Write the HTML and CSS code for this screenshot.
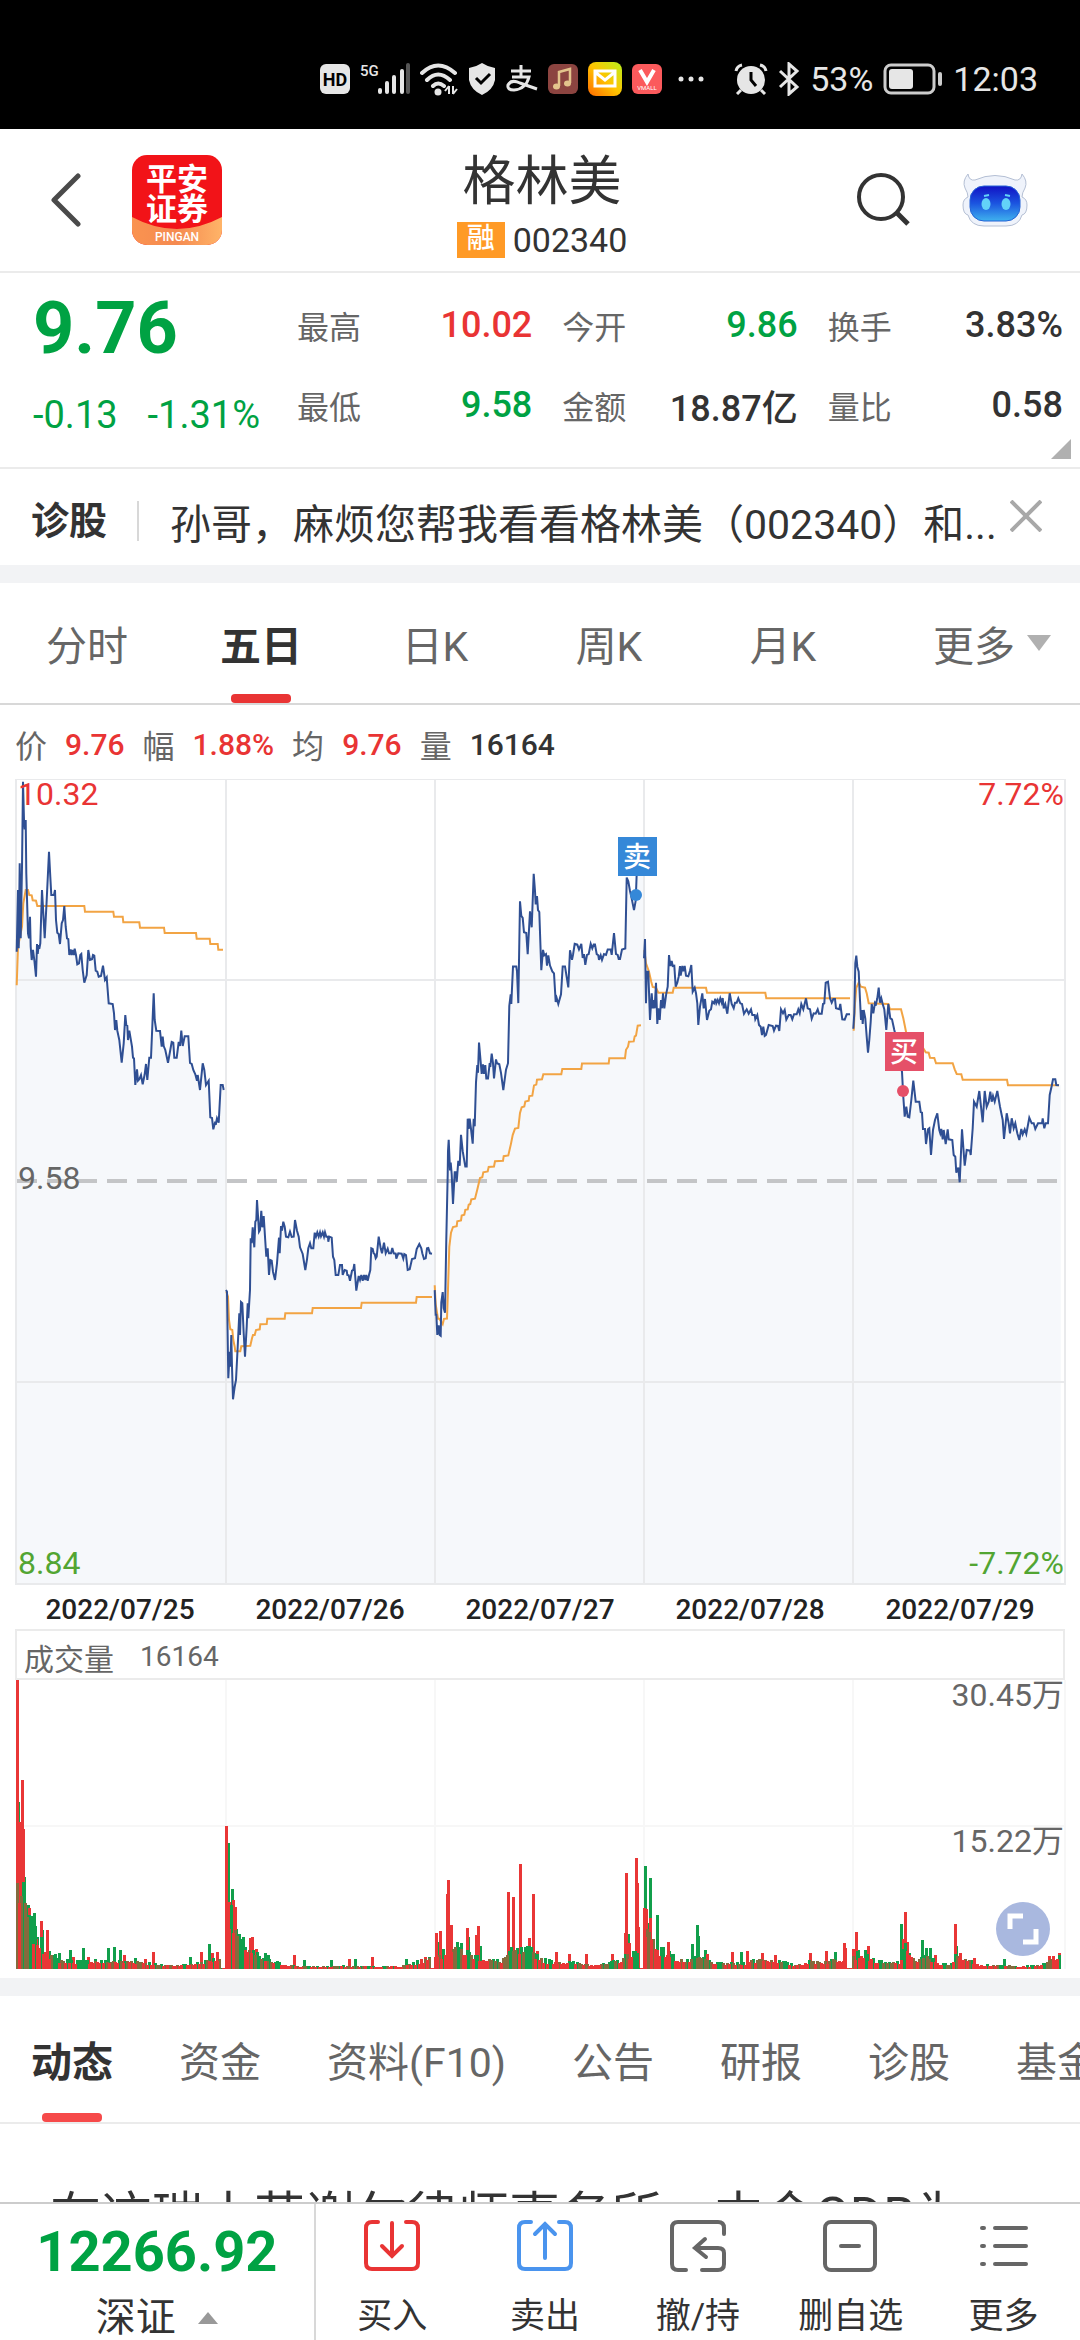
FILE: index.html
```html
<!DOCTYPE html>
<html lang="zh-CN">
<head>
<meta charset="utf-8">
<meta name="viewport" content="width=device-width, initial-scale=1">
<title>格林美 002340</title>
<link rel="stylesheet" href="styles.css">
</head>
<body>
<div class="app">
  <div class="status">
    <svg class="status-icon" width="30" height="30" viewBox="0 0 30 30"><rect width="30" height="30" rx="6" fill="#e6e6e6"/><text x="15" y="22" text-anchor="middle" font-size="18" font-weight="700" class="svg-text" fill="#000">HD</text></svg>
    <svg class="status-icon" width="50" height="34" viewBox="0 0 50 34"><text x="0" y="14" font-size="15" class="svg-text" font-weight="500" fill="#e6e6e6">5G</text><g stroke="#e6e6e6" stroke-width="4" stroke-linecap="round"><path d="M20 30v-2M27 30v-9M34 30v-15M42 30V9"/></g><path d="M48 30V3" stroke="#555" stroke-width="4" stroke-linecap="round"/></svg>
    <svg class="status-icon" width="38" height="34" viewBox="0 0 38 34"><g fill="none" stroke="#e6e6e6" stroke-width="4" stroke-linecap="round"><path d="M2 11Q18-4 35 11M7 18Q18 7 30 18M13 24Q18 19 24 24"/></g><circle cx="18" cy="30" r="3.500" fill="#e6e6e6"/><path d="M29 24v8M25 29l4-5M33 24v8M33 32l4-5" stroke="#e6e6e6" stroke-width="2"/></svg>
    <svg class="status-icon" width="28" height="32" viewBox="0 0 28 32"><path d="M14 0Q20 4 27 5V17Q25 27 14 32Q3 27 1 17V5Q8 4 14 0Z" fill="#e6e6e6"/><path d="M8 15l5 5 9-9" fill="none" stroke="#000" stroke-width="3"/></svg>
    <svg class="status-icon" width="32" height="28" viewBox="0 0 32 28"><g fill="none" stroke="#e6e6e6" stroke-width="3"><path d="M5 6H25M15 0V12M6 12H23Q20 24 8 25Q1 25 2 20Q5 14 14 18L31 24"/></g></svg>
    <svg class="status-icon" width="30" height="30" viewBox="0 0 30 30"><rect width="30" height="30" rx="6" fill="#8c4440"/><path d="M11 22V8l11-3v14" fill="none" stroke="#e3c48c" stroke-width="2.500"/><ellipse cx="8.500" cy="22.500" rx="3.500" ry="3" fill="#e3c48c"/><ellipse cx="19.500" cy="19.500" rx="3.500" ry="3" fill="#e3c48c"/></svg>
    <svg class="status-icon" width="34" height="34" viewBox="0 0 34 34"><defs><linearGradient id="mail" x1="0" y1="1" x2="1" y2="0"><stop offset="0" stop-color="#ff6a00"/><stop offset=".5" stop-color="#ffc400"/><stop offset="1" stop-color="#b8f01c"/></linearGradient></defs><rect width="34" height="34" rx="8" fill="url(#mail)"/><path d="M7 9H27V24H7ZM7 10l10 8 10-8" fill="none" stroke="#fff" stroke-width="3"/></svg>
    <svg class="status-icon" width="30" height="30" viewBox="0 0 30 30"><rect width="30" height="30" rx="6" fill="#fb5a5c"/><path d="M8 6l7 12 7-12" fill="none" stroke="#fff" stroke-width="4"/><text x="15" y="26" text-anchor="middle" font-size="6" class="svg-text" fill="#fff">VMALL</text></svg>
    <svg class="status-icon more" width="26" height="8" viewBox="0 0 26 8"><g fill="#e6e6e6"><circle cx="3" cy="4" r="2.500"/><circle cx="13" cy="4" r="2.500"/><circle cx="23" cy="4" r="2.500"/></g></svg>
    <svg class="status-icon alarm" width="34" height="32" viewBox="0 0 34 32"><circle cx="17" cy="17" r="14" fill="#e6e6e6"/><path d="M2 8Q3 3 8 2M32 8Q31 3 26 2M7 27l-4 4M27 27l4 4" stroke="#e6e6e6" stroke-width="3" fill="none"/><path d="M17 9v8l5 6" fill="none" stroke="#000" stroke-width="3"/></svg>
    <svg class="status-icon" width="22" height="34" viewBox="0 0 22 34"><path d="M2 9L19 25L11 32V2L19 9L2 25" fill="none" stroke="#e6e6e6" stroke-width="3"/></svg>
    <span class="status-text">53%</span>
    <svg class="status-icon" width="60" height="32" viewBox="0 0 60 32"><rect x="2" y="2" width="49" height="28" rx="6" fill="none" stroke="#ccc" stroke-width="3"/><rect x="6" y="6" width="24" height="20" rx="3" fill="#e6e6e6"/><path d="M57 11v10" stroke="#ccc" stroke-width="4" stroke-linecap="round"/></svg>
    <span class="status-text">12:03</span>
  </div>

  <header class="header">
    <button class="icon-btn back" aria-label="返回"><svg width="32" height="54" viewBox="0 0 32 54"><path d="M28 3L4 27L28 51" fill="none" stroke="#4a4a4a" stroke-width="5" stroke-linecap="round" stroke-linejoin="round"/></svg></button>
    <svg class="logo" width="90" height="90" viewBox="0 0 90 90"><defs><clipPath id="logoClip"><rect width="90" height="90" rx="15"/></clipPath><linearGradient id="gold"><stop offset="0" stop-color="#fa9350"/><stop offset=".5" stop-color="#f58a50"/><stop offset="1" stop-color="#ffb468"/></linearGradient></defs><g clip-path="url(#logoClip)"><rect width="90" height="90" fill="#f21318"/><path d="M0 62Q45 86 90 62V90H0Z" fill="url(#gold)"/></g><text x="45" y="35" text-anchor="middle" class="svg-text" font-size="31" font-weight="700" fill="#fff">平安</text><text x="45" y="65" text-anchor="middle" class="svg-text" font-size="31" font-weight="700" fill="#fff">证券</text><text x="45" y="86" text-anchor="middle" class="svg-text" font-size="12" font-weight="500" fill="#fff">PINGAN</text></svg>
    <div class="title">
      <h1>格林美</h1>
      <div class="code"><span class="tag">融</span><span>002340</span></div>
    </div>
    <button class="icon-btn search" aria-label="搜索"><svg width="54" height="54" viewBox="0 0 54 54"><circle cx="25" cy="24" r="22" fill="none" stroke="#333" stroke-width="4"/><path d="M40 39l12 12" stroke="#333" stroke-width="5"/></svg></button>
    <button class="icon-btn" aria-label="助手"><svg width="66" height="54" viewBox="0 0 66 54"><defs><linearGradient id="face" x1="0" y1="0" x2="0" y2="1"><stop offset="0" stop-color="#1111c4"/><stop offset=".5" stop-color="#1b55e0"/><stop offset="1" stop-color="#3fb2ee"/></linearGradient></defs><path d="M6 1Q7 8 13 7Q33-2 53 7Q59 8 60 1Q66 8 63 15Q60 20 60 24Q65 26 65 32Q65 41 60 42Q57 53 44 53H22Q9 53 6 42Q1 41 1 32Q1 26 6 24Q6 20 3 15Q0 8 6 1Z" fill="#eff3fb" stroke="#b4bfd4" stroke-width="1"/><rect x="8" y="13" width="50" height="35" rx="14" fill="url(#face)" stroke="#2463d6" stroke-width="1"/><ellipse cx="24" cy="31" rx="4.500" ry="6" fill="#63d2f8"/><ellipse cx="44" cy="31" rx="4.500" ry="6" fill="#63d2f8"/><path d="M22 23l5-1M43 22l5 1" stroke="#63d2f8" stroke-width="2"/></svg></button>
  </header>

  <section class="quote">
    <div class="price">
      <strong>9.76</strong>
      <div class="change"><span>-0.13</span><span>-1.31%</span></div>
    </div>
    <dl class="stats">
      <div><dt>最高</dt><dd class="up">10.02</dd></div>
      <div><dt>今开</dt><dd class="down">9.86</dd></div>
      <div><dt>换手</dt><dd>3.83%</dd></div>
      <div><dt>最低</dt><dd class="down">9.58</dd></div>
      <div><dt>金额</dt><dd>18.87亿</dd></div>
      <div><dt>量比</dt><dd>0.58</dd></div>
    </dl>
    <svg class="corner" width="20" height="20" viewBox="0 0 20 20"><path d="M20 0V20H0Z" fill="#b0b0b0"/></svg>
  </section>

  <section class="notice">
    <b>诊股</b>
    <p>孙哥，麻烦您帮我看看格林美（002340）和...</p>
    <button class="icon-btn close" aria-label="关闭"><svg width="32" height="32" viewBox="0 0 32 32"><path d="M1 1L31 31M31 1L1 31" stroke="#a8a8a8" stroke-width="4"/></svg></button>
  </section>

  <nav class="periods">
    <button>分时</button><button class="active">五日</button><button>日K</button><button>周K</button><button>月K</button>
    <button class="more-periods">更多<svg width="24" height="16" viewBox="0 0 24 16"><path d="M0 0H24L12 16Z" fill="#b0b0b0"/></svg></button>
  </nav>

  <div class="legend">
    <span>价</span><span class="up num">9.76</span><span>幅</span><span class="up num">1.88%</span><span>均</span><span class="up num">9.76</span><span>量</span><span class="dark num">16164</span>
  </div>

  <section class="chart">
    <svg id="price" viewBox="0 0 1080 806" role="img" aria-label="五日走势">
      <g id="areas" fill="#f6f8fb"></g>
      <path d="M15 201H1065M15 603H1065M226 0V805M435 0V805M644 0V805M853 0V805" stroke="#e9eaec" stroke-width="2"/>
      <path d="M16 0V806M1065 0V806M16 0H1065M16 805H1065" stroke="#e9eaec" stroke-width="2"/>
      <path d="M17 402H1064" stroke="#c4c5c7" stroke-width="4" stroke-dasharray="20 10"/>
      <g id="averages" fill="none" stroke="#f2a444" stroke-width="2"></g>
      <g id="prices" fill="none" stroke="#2f4f93" stroke-width="2"></g>
      <circle cx="636" cy="116" r="6" fill="#3588d8"/><rect x="618" y="58" width="39" height="39" fill="#3588d8"/>
      <text x="637" y="88" text-anchor="middle" class="svg-text" font-size="28" font-weight="500" fill="#fff">卖</text>
      <circle cx="903" cy="312" r="6" fill="#e55068"/><rect x="885" y="253" width="39" height="39" fill="#e55068"/>
      <text x="904" y="283" text-anchor="middle" class="svg-text" font-size="28" font-weight="500" fill="#fff">买</text>
    </svg>
    <span class="axis top left up">10.32</span><span class="axis top right up">7.72%</span>
    <span class="axis middle left">9.58</span>
    <span class="axis bottom left low">8.84</span><span class="axis bottom right low">-7.72%</span>
  </section>
  <div class="dates"><span>2022/07/25</span><span>2022/07/26</span><span>2022/07/27</span><span>2022/07/28</span><span>2022/07/29</span></div>

  <div class="volume-title"><span>成交量</span><span class="amount">16164</span></div>
  <section class="chart volume">
    <svg id="volume" viewBox="0 0 1080 290" role="img" aria-label="成交量">
      <path d="M16 146H1065M226 0V289M435 0V289M644 0V289M853 0V289M1065 0V289" stroke="#f7f7f7" stroke-width="2"/>
      <g id="bars"></g>
    </svg>
    <span class="axis top right">30.45万</span><span class="axis half right">15.22万</span>
    <button class="icon-btn expand" aria-label="全屏"><svg width="54" height="54" viewBox="0 0 54 54"><circle cx="27" cy="27" r="27" fill="#a9b8df"/><path d="M14 27V14H27M27 40H40V27" fill="none" stroke="#fff" stroke-width="5"/></svg></button>
  </section>

  <nav class="sections">
    <button class="active">动态</button><button>资金</button><button>资料(F10)</button><button>公告</button><button>研报</button><button>诊股</button><button>基金</button>
  </nav>
  <article class="feed">在这瑞士苏谢尔律师事务所，中金GDR为</article>

  <footer class="bar">
    <button class="index"><strong>12266.92</strong><span>深证<svg width="20" height="12" viewBox="0 0 20 12"><path d="M10 0L20 12H0Z" fill="#999"/></svg></span></button>
    <button class="action"><svg width="56" height="52" viewBox="0 0 56 52"><g fill="none" stroke="#e93434" stroke-width="4" stroke-linecap="round"><path d="M14 2H8Q2 2 2 8V43Q2 49 8 49H48Q54 49 54 43V8Q54 2 48 2H42M28 3V36M18 26l10 10 10-10"/></g></svg>买入</button>
    <button class="action"><svg width="56" height="52" viewBox="0 0 56 52"><g fill="none" stroke="#4a94ee" stroke-width="4" stroke-linecap="round"><path d="M14 2H8Q2 2 2 8V43Q2 49 8 49H48Q54 49 54 43V8Q54 2 48 2H42M28 38V4M18 14L28 4l10 10"/></g></svg>卖出</button>
    <button class="action"><svg width="56" height="52" viewBox="0 0 56 52"><g fill="none" stroke="#666" stroke-width="4" stroke-linecap="round"><path d="M54 14V8Q54 2 48 2H8Q2 2 2 8V44Q2 50 8 50H16M32 50H48Q54 50 54 44V33Q54 28 48 28H25M35 19l-10 9 11 9"/></g></svg>撤/持</button>
    <button class="action"><svg width="56" height="52" viewBox="0 0 56 52"><g fill="none" stroke="#666" stroke-width="4" stroke-linecap="round"><rect x="2" y="2" width="50" height="48" rx="6"/><path d="M18 26H36"/></g></svg>删自选</button>
    <button class="action"><svg width="50" height="52" viewBox="0 0 50 52"><g fill="none" stroke="#666" stroke-width="4" stroke-linecap="round"><path d="M3 8h2M16 8H47M3 26h2M16 26H47M3 44h2M16 44H47"/></g></svg>更多</button>
  </footer>
</div>
<script src="chart.js"></script>
</body>
</html>
```

FILE: styles.css
```css
:root {
  --sans: Roboto, "Noto Sans CJK SC", sans-serif;
  --red: #e93434;
  --green: #00a243;
  --ink: #333;
  --muted: #666;
}
* { box-sizing: border-box; }
body { margin: 0; background: #fff; color: var(--ink); font-family: var(--sans); }
button { border: 0; padding: 0; margin: 0; background: none; color: inherit; font: inherit; white-space: nowrap; }
svg { display: block; flex: none; }
h1, p, dl, dd { margin: 0; }
.svg-text { font-family: var(--sans); }
.app { display: flex; flex-direction: column; height: 100vh; overflow: hidden; }
.app > * { flex: none; }
.up { color: var(--red); }
.down { color: var(--green); }
.low { color: #52a532; }
.dark { color: var(--ink); }
.icon-btn { display: flex; align-items: center; justify-content: center; }

.status { display: flex; align-items: center; justify-content: flex-end; gap: 10px; height: 129px; padding: 28px 42px 0 0; background: #000; color: #e6e6e6; }
.status-text { font-size: 34px; line-height: 40px; }
.alarm { margin-left: 20px; }
.more { margin-left: 6px; }

.header { display: grid; grid-template-columns: 82px 120px 1fr 106px 66px; align-items: center; height: 144px; padding: 0 52px 0 50px; border-bottom: 2px solid #ebebeb; }
.header .back, .header .search { justify-content: flex-start; }
.title { display: flex; flex-direction: column; align-items: center; padding: 12px 24px 0 0; }
.title h1 { font-size: 53px; line-height: 64px; font-weight: 400; }
.code { display: flex; align-items: center; gap: 8px; font-size: 34px; line-height: 44px; margin-top: 4px; }
.tag { width: 48px; height: 36px; background: #ff9a26; color: #fff; font-size: 28px; line-height: 34px; font-weight: 500; text-align: center; }

.quote { position: relative; display: grid; grid-template-columns: 264px 1fr; height: 196px; padding: 12px 17px 0 33px; border-bottom: 2px solid #ebebeb; }
.price { color: var(--green); }
.price strong { display: block; font-size: 72px; line-height: 88px; font-weight: 700; }
.change { display: flex; gap: 30px; font-size: 38px; line-height: 48px; margin-top: 18px; }
.stats { display: grid; grid-template-columns: repeat(3, 1fr); column-gap: 30px; grid-auto-rows: 80px; }
.stats > div { display: flex; justify-content: space-between; align-items: center; }
.stats dt { font-size: 32px; color: var(--muted); }
.stats dd { font-size: 36px; font-weight: 500; }
.corner { position: absolute; right: 9px; bottom: 8px; }

.notice { display: flex; align-items: center; height: 114px; padding: 8px 38px 0 31px; border-bottom: 18px solid #f2f3f5; }
.notice b { font-size: 38px; padding-right: 30px; border-right: 2px solid #d8d8d8; line-height: 40px; }
.notice p { flex: 1; padding-left: 31px; font-size: 41px; white-space: nowrap; overflow: hidden; }
.close { margin-bottom: 10px; }

.periods { display: grid; grid-template-columns: repeat(5, 174fr) 210fr; height: 122px; border-bottom: 2px solid #d8d8d8; font-size: 41px; color: var(--muted); }
.periods button, .sections button { position: relative; }
.periods .active, .sections .active { color: var(--ink); font-weight: 700; }
.active::after { content: ""; position: absolute; left: 50%; bottom: 0; width: 60px; height: 9px; margin-left: -30px; border-radius: 4px; background: var(--red); }
.periods .more-periods { display: flex; align-items: center; justify-content: center; gap: 12px; padding-left: 34px; }

.legend { display: flex; align-items: center; gap: 18px; height: 74px; padding: 4px 15px 0; font-size: 32px; color: var(--muted); }
.num { font-size: 30px; font-weight: 500; }

.chart { position: relative; }
.chart > svg { width: 100%; height: auto; }
.axis { position: absolute; font-size: 32px; line-height: 30px; color: var(--muted); }
.axis.up { color: var(--red); }
.axis.low { color: #52a532; }
.left { left: 18px; }
.right { right: 16px; }
.top { top: 0; }
.middle { top: 384px; }
.half { top: 146px; }
.bottom { bottom: 7px; }
.dates { display: grid; grid-template-columns: repeat(5, 1fr); height: 44px; padding: 0 15px; font-size: 28px; line-height: 50px; font-weight: 500; text-align: center; color: #222; }

.volume-title { display: flex; align-items: center; gap: 26px; height: 51px; margin: 0 15px; padding: 4px 7px 0; border: 2px solid #ebebeb; font-size: 30px; color: var(--muted); }
.amount { font-size: 28px; }
.expand { position: absolute; right: 30px; bottom: 14px; }

.sections { display: flex; gap: 66px; height: 146px; margin-top: 8px; padding-left: 31px; border-top: 18px solid #f2f3f5; border-bottom: 2px solid #ebebeb; font-size: 41px; color: var(--muted); overflow: hidden; }
.sections .active::after { background: #f64a4a; }
.feed { min-height: 0; overflow: hidden; padding: 58px 50px 0; font-size: 51px; line-height: 70px; white-space: nowrap; }
.app > .feed { flex: 1 1 0; }

.bar { display: grid; grid-template-columns: 316fr repeat(5, 153fr); height: 138px; border-top: 2px solid #ccc; background: #fff; }
.index { display: flex; flex-direction: column; align-items: center; border-right: 2px solid #d8d8d8; font-size: 40px; }
.index strong { font-size: 56px; line-height: 64px; margin-top: 16px; color: var(--green); }
.index span { display: flex; align-items: center; gap: 22px; line-height: 60px; margin-top: 4px; }
.action { display: flex; flex-direction: column; align-items: center; gap: 20px; padding-top: 16px; font-size: 35px; line-height: 50px; }
```

FILE: chart.js
```js
// One entry per trading day. Points are in thirds of a unit, offset by dx/dy; sy is the vertical scale.
const days = [
  { dx: 0, dy: -19, end: 677,
    price: "50,575 54,390 56,565 59,310 62,535 66,320 69,65 72,180 74,208 77,180 79,340 84,520 87,535 90,470 92,560 95,600 99,570 103,600 108,650 111,552 113,582 116,555 118,566 121,550 126,390 130,460 134,535 140,420 147,275 151,350 154,405 162,405 165,390 168,480 172,518 176,522 180,552 185,490 189,480 193,438 197,500 201,535 205,537 208,585 212,568 215,585 219,570 222,585 224,566 228,585 232,613 237,610 241,585 244,582 248,630 253,668 260,645 265,570 270,600 276,598 279,585 283,587 287,632 292,635 296,650 303,648 309,617 315,660 320,652 326,730 338,732 342,760 345,810 349,780 352,812 358,840 365,908 371,850 376,765 379,795 382,797 384,840 388,812 396,860 399,893 402,895 406,975 411,928 414,962 418,958 423,945 428,973 434,943 438,912 442,960 448,893 453,893 457,800 461,700 464,780 469,812 480,813 485,860 488,830 491,858 496,870 504,908 509,880 515,846 520,848 523,893 530,893 536,846 540,858 544,812 548,858 554,829 565,829 570,909 575,912 580,930 586,943 591,962 593,945 600,990 608,910 613,930 618,975 626,962 631,1072 636,1074 640,1108 645,1088 648,1090 651,1075 656,1088 662,975 668,975 671,990",
    avg: "50,676 54,560 66,500 70,430 77,390 84,390 88,405 95,406 98,421 108,422 112,438 253,438 255,455 340,455 342,470 368,470 370,487 418,487 420,503 492,503 494,519 588,519 590,536 629,536 631,552 653,552 655,569 669,569" },
  { dx: 0, dy: 361, end: 1304,
    price: "678,450 681,455 685,715 689,635 691,680 694,585 696,680 699,778 704,740 708,720 713,620 718,520 720,585 723,486 727,490 731,580 735,650 740,560 743,490 745,535 750,450 752,295 755,310 758,262 763,322 766,245 769,240 771,180 777,275 780,270 784,212 787,262 791,228 795,290 799,350 803,325 807,405 811,360 815,362 819,395 825,420 831,370 837,293 839,340 843,258 846,272 850,245 854,260 858,290 865,292 870,275 875,291 881,290 885,240 891,272 896,290 900,322 908,342 916,390 921,358 925,325 930,310 934,325 940,325 944,278 948,290 952,277 956,290 960,277 963,289 968,277 972,290 975,277 979,290 984,290 985,305 988,290 995,293 999,350 1003,360 1007,405 1015,405 1020,375 1026,375 1028,405 1034,390 1040,392 1042,405 1046,406 1050,422 1056,392 1060,390 1063,372 1069,452 1076,408 1080,420 1084,405 1088,422 1092,405 1096,420 1099,405 1103,422 1107,405 1111,390 1114,325 1118,327 1121,340 1124,342 1127,355 1130,350 1136,290 1142,325 1146,340 1152,308 1157,340 1163,326 1167,340 1173,340 1177,324 1181,340 1187,341 1189,356 1195,340 1205,341 1210,356 1213,342 1218,345 1223,390 1229,388 1236,357 1245,355 1250,327 1258,312 1264,325 1267,340 1272,357 1277,355 1281,325 1285,324 1290,340 1296,341",
    avg: "679,455 684,470 687,540 691,568 697,570 700,600 704,620 706,634 721,634 724,619 751,617 756,595 759,585 764,585 768,570 779,568 781,553 800,552 802,536 854,536 856,520 936,520 938,504 1083,504 1085,488 1248,488 1250,471 1296,471" },
  { dx: 420, dy: 1, sy: 2.613, end: 671,
    price: "44,1333 47,1400 49,1395 52,1450 56,1425 59,1450 62,1452 64,1365 68,1338 71,1380 75,1392 79,1200 83,1030 84,970 86,940 90,1020 92,1000 95,1030 99,1108 104,1025 108,1025 110,1050 115,995 119,1008 123,927 128,970 132,990 136,1010 140,1010 143,885 146,912 149,885 153,912 158,950 161,885 164,905 168,790 172,745 174,765 177,686 181,725 185,768 189,743 192,768 196,745 199,780 204,780 209,740 211,750 215,715 219,740 222,780 228,730 231,740 238,743 243,765 250,810 258,757 264,740 268,590 272,560 274,585 279,487 289,487 291,500 295,583 300,317 304,355 308,360 312,398 319,400 323,455 330,343 335,385 341,245 345,290 347,325 351,303 354,340 358,345 364,497 369,444 373,458 378,455 381,485 385,458 390,485 397,500 402,505 407,580 410,570 415,585 423,560 428,487 435,487 440,515 445,542 450,445 456,470 459,457 464,428 472,430 477,443 484,428 488,465 492,455 496,483 501,457 506,455 512,428 517,440 521,430 525,430 530,455 535,458 537,470 542,458 546,470 552,455 558,457 563,443 572,443 575,457 582,400 588,455 593,457 596,468 600,468 606,443 616,440 620,255 625,265 630,290 635,310 642,340 647,315 650,245 652,200 660,200",
    avg: "44,1320 47,1370 54,1408 58,1408 63,1415 68,1422 72,1408 81,1407 84,1330 88,1220 93,1183 99,1168 110,1166 112,1153 123,1151 125,1138 133,1136 136,1123 143,1122 146,1110 151,1108 154,1096 165,1094 172,1070 180,1040 187,1038 190,1025 203,1023 206,1011 222,1010 225,996 249,995 251,983 265,981 273,950 278,928 285,911 295,909 300,870 305,855 313,853 316,840 326,838 328,826 337,825 342,798 349,796 351,783 366,782 370,769 424,769 427,755 484,755 486,741 566,741 568,727 615,727 618,705 624,697 627,684 641,683 644,670 648,668 653,642 663,641" },
  { dx: 640, dy: 21, end: 638,
    price: "12,475 15,417 18,610 20,515 25,515 30,660 35,580 38,625 42,600 44,625 48,548 52,672 55,625 59,660 63,600 66,625 69,580 73,625 79,580 83,560 87,465 91,498 95,483 98,498 103,497 107,560 112,548 116,530 120,498 122,527 127,498 130,514 134,498 138,527 145,529 150,512 154,495 158,575 164,563 168,580 172,610 175,675 180,620 187,580 191,625 195,597 201,660 208,632 213,628 217,605 222,610 226,596 229,610 233,600 237,610 241,595 245,608 248,594 251,625 256,612 262,641 269,580 275,612 281,625 285,608 290,608 295,595 301,610 306,612 312,641 320,628 326,641 333,628 337,645 344,645 346,658 352,645 357,675 362,680 366,705 370,680 374,708 378,705 386,675 398,678 402,692 408,677 414,678 418,693 423,628 429,640 434,630 439,659 446,645 452,645 457,658 462,643 470,643 475,628 479,640 484,612 490,628 498,595 503,625 510,628 515,656 521,640 527,641 533,628 537,641 545,641 549,612 553,610 557,548 564,545 570,595 575,608 580,597 585,597 588,625 598,628 601,612 607,658 614,659 620,643 630,643",
    avg: "13,450 18,490 27,515 34,546 38,561 48,563 55,578 98,578 101,563 198,563 201,578 376,578 379,595 630,595" },
  { dx: 640, dy: 21, end: 1262,
    price: "640,686 643,640 646,490 649,467 652,500 656,515 660,600 663,660 666,630 668,672 671,630 676,655 680,710 684,758 688,720 692,665 695,612 700,640 705,608 708,612 712,595 716,563 720,608 724,595 728,612 733,628 739,690 745,612 751,655 756,658 763,690 768,710 776,790 786,815 790,890 794,950 799,920 803,950 808,952 814,900 820,842 827,905 838,905 842,936 846,938 849,987 855,987 858,1032 864,988 868,985 873,1065 879,990 885,960 892,940 898,990 901,1000 904,987 908,1018 911,990 917,1032 923,988 926,1018 937,1020 941,1065 946,1070 949,1118 955,1103 959,1147 966,988 974,1097 980,1050 990,1052 992,1065 998,985 1002,905 1010,920 1018,873 1023,920 1028,967 1034,873 1040,920 1046,905 1051,875 1055,905 1059,888 1064,905 1072,873 1080,920 1088,960 1092,1017 1100,940 1106,970 1110,1000 1115,955 1121,985 1126,970 1132,1000 1138,1020 1144,987 1148,1003 1154,988 1159,1002 1168,953 1175,970 1181,970 1186,987 1194,970 1206,970 1208,955 1213,985 1217,970 1224,970 1229,885 1235,858 1239,838 1246,838 1249,855 1257,856",
    avg: "641,692 645,610 649,563 656,548 663,560 675,563 680,580 686,610 745,612 750,628 783,628 790,655 798,695 805,730 850,745 857,757 866,758 870,773 883,774 888,790 938,790 944,808 950,822 964,823 968,839 1101,839 1104,856 1257,856" }
];

const NS = "http://www.w3.org/2000/svg";
function add(parentId, d, fill) {
  const path = document.createElementNS(NS, "path");
  path.setAttribute("d", d);
  if (fill) path.setAttribute("fill", fill);
  document.getElementById(parentId).appendChild(path);
}
function trace(text, day) {
  return text.split(" ").map(p => {
    const [x, y] = p.split(",").map(Number);
    return (x / 3 + day.dx).toFixed(1) + "," + (y / (day.sy || 3) + day.dy).toFixed(1);
  });
}
for (const day of days) {
  const pts = trace(day.price, day);
  add("prices", "M" + pts.join("L"));
  add("averages", "M" + trace(day.avg, day).join("L"));
  add("areas", "M" + pts.join("L") + "H" + (day.end / 3 + day.dx).toFixed(1) + "V805H" + pts[0].split(",")[0] + "Z");
}

// Ordinary turnover as x,height; the spikes are listed after it.
const level = [[17,90],[24,70],[30,44],[42,25],[50,14],[60,9],[100,8],[140,8],[160,4],[190,5],[210,9],[220,12],[221,0],[225,0],[226,70],[232,50],[238,32],[250,20],[262,10],[280,6],[300,3],[400,3],[420,8],[429,11],[430,0],[434,0],[435,20],[440,15],[455,24],[470,16],[480,12],[500,8],[510,18],[530,20],[545,9],[570,7],[590,5],[605,5],[620,10],[632,18],[638,15],[639,0],[643,0],[644,45],[652,32],[660,20],[672,14],[685,8],[700,12],[715,6],[740,6],[762,11],[780,8],[795,4],[810,8],[825,8],[845,12],[847,0],[851,0],[852,15],[865,16],[875,8],[890,6],[900,8],[906,25],[915,8],[926,13],[940,6],[950,4],[956,15],[975,6],[990,4],[1030,3],[1045,6],[1052,12],[1060,12]];
const spikes = {
  red: "17,289 19,147 22,189 23,140 25,50 29,61 36,30 41,48 47,39 73,12 88,12 124,14 145,10 153,17 201,17 212,16 217,17 226,143 229,67 233,69 235,62 240,30 250,31 252,32 256,20 294,14 349,10 372,12 421,10 425,12 436,36 440,38 447,75 448,89 451,44 467,41 476,34 478,43 508,77 513,72 520,105 529,31 533,75 537,18 556,17 569,15 586,15 612,15 625,36 626,96 629,26 636,111 637,86 638,42 644,61 646,60 650,51 668,27 707,15 732,17 747,18 762,16 775,14 810,16 826,18 844,26 845,21 853,20 856,37 868,23 903,30 905,57 907,27 935,14 955,45 960,16 974,11 1049,13 1053,13 1059,16",
  green: "18,167 24,92 28,64 31,53 34,56 37,32 42,39 49,18 55,15 59,16 70,19 83,21 95,10 108,21 114,22 120,19 135,11 190,12 209,25 228,126 232,80 236,40 245,22 265,16 268,14 304,9 331,9 355,10 406,10 429,12 437,27 443,13 449,42 461,26 468,32 480,23 520,30 534,16 628,35 645,103 648,46 650,91 657,54 669,18 692,25 697,44 698,33 705,19 741,17 835,17 858,19 901,45 909,16 922,29 926,21 930,21 956,23 1004,10"
};
const bar = (x, h) => `M${x - 1} 289v-${h}h3v${h}Z`;
const tint = { red: "#e93636", green: "#119f4b" };
for (const color of ["green", "red"]) {
  add("bars", spikes[color].split(" ").map(s => bar(...s.split(",").map(Number))).join(""), tint[color]);
}
const base = { red: "", green: "", mixed: "" };
let seed = 7, k = 0;
for (let x = 17; x <= 1060; x += 2) {
  while (k < level.length - 2 && level[k + 1][0] <= x) k++;
  const [x0, h0] = level[k], [x1, h1] = level[k + 1];
  seed = (seed * 1103515245 + 12345) % 2147483648;
  const r = seed / 2147483648;
  const h = Math.max(1, Math.round((h0 + (h1 - h0) * (x - x0) / (x1 - x0)) * (0.6 + r * 0.6)));
  base[r < 0.45 ? "red" : r < 0.7 ? "mixed" : "green"] += bar(x, h);
}
add("bars", base.green, tint.green);
add("bars", base.mixed, "#846b3d");
add("bars", base.red, tint.red);
```
